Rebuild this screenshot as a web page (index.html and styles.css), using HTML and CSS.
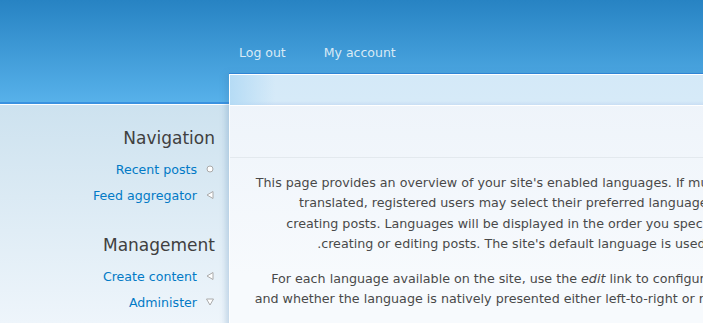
FILE: index.html
```html
<!DOCTYPE html>
<html lang="en">
<head>
  <meta charset="UTF-8">
  <title>Languages</title>
  <link rel="stylesheet" href="styles.css">
</head>
<body>

  <div class="page">
    <div class="header">
      <ul class="top-links">
        <li><a href="#">Log out</a></li>
        <li><a href="#">My account</a></li>
      </ul>
    </div>

    <div class="main">
      <div class="sidebar">
        <div class="block">
          <h2>Navigation</h2>
          <ul class="menu">
            <li class="leaf"><a href="#">Recent posts</a></li>
            <li class="collapsed"><a href="#">Feed aggregator</a></li>
          </ul>
        </div>
        <div class="block">
          <h2>Management</h2>
          <ul class="menu">
            <li class="collapsed"><a href="#">Create content</a></li>
            <li class="expanded"><a href="#">Administer</a></li>
          </ul>
        </div>
      </div>

      <div class="content">
        <div class="content-cap"></div>
        <div class="content-title"></div>
        <div class="content-body">
          <p>This page provides an overview of your site's enabled languages. If multiple languages are available and enabled, the text on your site interface may be translated, registered users may select their preferred language on the <em>My account</em> page, and site authors may indicate a specific language when creating posts. Languages will be displayed in the order you specify in places such as the language switcher block, or the language dropdown when creating or editing posts. The site's default language is used for anonymous visitors and for users who have not selected a preferred language.</p>
          <p>For each language available on the site, use the <em>edit</em> link to configure language details, including name, an optional language-specific path or domain, and whether the language is natively presented either left-to-right or right-to-left. These languages also appear in the <em>Language</em> selection when creating a post of a content type with multilingual support.</p>
        </div>
      </div>
    </div>
  </div>

</body>
</html>
```

FILE: styles.css
```css
html, body {
  margin: 0;
  padding: 0;
  height: 100%;
  overflow: hidden;
  font-family: "DejaVu Sans", Verdana, sans-serif;
  font-size: 12px;
  color: #494949;
}

.page {
  min-height: 100%;
  width: 1300px;
  background: linear-gradient(to bottom,
    #2783c3 0, #57b1ea 102px, #3a92e0 102px, #3a92e0 104px,
    #ffffff 104px, #ffffff 105px,
    #cde2ef 105px, #eef5fb 323px);
}

a {
  text-decoration: none;
  color: #027ac6;
}

/* Header */
.header {
  height: 74px;
}

.top-links {
  list-style: none;
  margin: 0;
  padding: 45px 0 0 239px;
  display: flex;
  gap: 38px;
}

.top-links a {
  color: #d9eaf5;
  font-size: 12.5px;
}

/* Layout */
.main {
  display: flex;
  align-items: flex-start;
}

.sidebar {
  width: 229px;
  flex-shrink: 0;
  padding-top: 54px;
  text-align: right;
}

.block {
  padding-right: 15px;
  margin-bottom: 27px;
}

.block h2 {
  margin: 0 -1px 8px 0;
  font-size: 17px;
  font-weight: normal;
  color: #404040;
}

.menu {
  list-style: none;
  margin: 0;
  padding: 0;
}

.menu li {
  display: flex;
  justify-content: flex-end;
  align-items: center;
  gap: 9px;
  height: 26px;
}

.menu a {
  font-size: 12.6px;
}

.menu li::after {
  content: "";
  width: 8px;
  height: 8px;
  flex-shrink: 0;
  background-repeat: no-repeat;
}

.menu li.leaf::after {
  background-image: url("data:image/svg+xml,%3Csvg xmlns='http://www.w3.org/2000/svg' width='8' height='8'%3E%3Ccircle cx='4' cy='4' r='3' fill='%23fff' stroke='%23aaa'/%3E%3C/svg%3E");
}

.menu li.collapsed::after {
  background-image: url("data:image/svg+xml,%3Csvg xmlns='http://www.w3.org/2000/svg' width='8' height='8'%3E%3Cpath d='M7 0.5 L7 7.5 L1 4 Z' fill='%23fff' stroke='%23aaa'/%3E%3C/svg%3E");
}

.menu li.expanded::after {
  background-image: url("data:image/svg+xml,%3Csvg xmlns='http://www.w3.org/2000/svg' width='8' height='8'%3E%3Cpath d='M0.5 1 L7.5 1 L4 7 Z' fill='%23fff' stroke='%23aaa'/%3E%3C/svg%3E");
}

/* Content */
.content {
  width: 1040px;
  border-left: 1px solid #fff;
  border-top: 1px solid #fff;
  box-shadow: -3px 0 6px rgba(60, 120, 170, 0.25), 0 -1px 0 #2f86dc;
  background: linear-gradient(to bottom, #edf3fa, #f7fafd 200px);
}

.content-cap {
  height: 30px;
  border-bottom: 1px solid #fff;
  background:
    linear-gradient(to right, rgba(178, 218, 245, 0.9), rgba(178, 218, 245, 0) 45px),
    linear-gradient(to bottom, #d4e9f8, #d6eaf8 26px, #c9def4);
}

.content-title {
  height: 51px;
  border-bottom: 1px solid #e3e9ee;
}

.content-body {
  direction: rtl;
  text-align: right;
  padding: 8px 42px 0 20px;
  font-size: 12.7px;
  line-height: 20.4px;
}

.content-body p {
  margin: 7px 0 14.4px;
}
```
